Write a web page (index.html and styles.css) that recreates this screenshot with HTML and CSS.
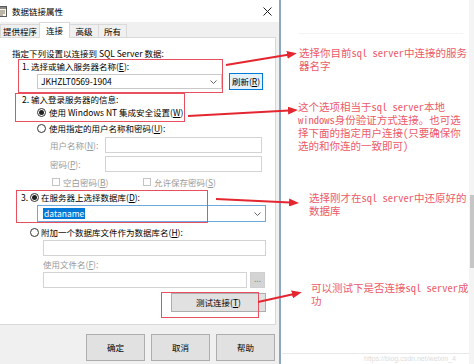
FILE: index.html
```html
<!DOCTYPE html>
<html lang="zh-CN">
<head>
<meta charset="utf-8">
<title>数据链接属性</title>
<link rel="stylesheet" href="styles.css">
</head>
<body>
<div class="page">
  <div class="dialog">
    <div class="titlebar">
      <svg class="app-icon" width="11" height="11" viewBox="0 0 11 11"><rect x="0.5" y="0.5" width="10" height="10" fill="#fdf6dc" stroke="#5a5a5a"/><rect x="1" y="1" width="9" height="2" fill="#8a8a8a"/><path d="M2 5h7M2 7h7M2 9h5" stroke="#777" stroke-width="1"/></svg>
      <span class="title">数据链接属性</span>
      <svg class="close" width="9" height="9" viewBox="0 0 9 9"><path d="M0.5 0.5L8.5 8.5M8.5 0.5L0.5 8.5" stroke="#222" stroke-width="1"/></svg>
    </div>
    <div class="tabs">
      <div class="tab t1">提供程序</div>
      <div class="tab t2 active">连接</div>
      <div class="tab t3">高级</div>
      <div class="tab t4">所有</div>
    </div>
    <div class="panel">
      <div class="row intro">指定下列设置以连接到 SQL Server 数据:</div>
      <div class="row lbl1">1. 选择或输入服务器名称(<u>E</u>):</div>
      <div class="row combo-row">
        <div class="combo c1"><span class="ctext">JKHZLT0569-1904</span><svg class="chev" width="7" height="4" viewBox="0 0 7 4"><path d="M0.5 0.5L3.5 3.5L6.5 0.5" fill="none" stroke="#666"/></svg></div>
        <div class="btn refresh">刷新(<u>R</u>)</div>
      </div>
      <div class="row lbl2">2. 输入登录服务器的信息:</div>
      <div class="row radio-row r1"><span class="radio on"></span><span class="rtext">使用 Windows NT 集成安全设置(<u>W</u>)</span></div>
      <div class="row radio-row r2"><span class="radio"></span><span class="rtext">使用指定的用户名称和密码(<u>U</u>):</span></div>
      <div class="row field-row f1"><span class="flabel">用户名称(<u>N</u>):</span><span class="input w157"></span></div>
      <div class="row field-row f2"><span class="flabel">密码(<u>P</u>):</span><span class="input w157"></span></div>
      <div class="row check-row">
        <span class="chk-group g1"><span class="chk"></span><span class="ctext2">空白密码(<u>B</u>)</span></span>
        <span class="chk-group"><span class="chk"></span><span class="ctext2">允许保存密码(<u>S</u>)</span></span>
      </div>
      <div class="row lbl3"><span class="num">3.</span><span class="radio on"></span><span class="rtext2">在服务器上选择数据库(<u>D</u>):</span></div>
      <div class="row combo-row2">
        <div class="combo c2"><span class="sel">dataname</span><svg class="chev" width="7" height="4" viewBox="0 0 7 4"><path d="M0.5 0.5L3.5 3.5L6.5 0.5" fill="none" stroke="#666"/></svg></div>
      </div>
      <div class="row attach"><span class="radio"></span><span class="rtext2">附加一个数据库文件作为数据库名(<u>H</u>):</span></div>
      <div class="row in-row"><span class="input w223"></span></div>
      <div class="row fname">使用文件名(<u>F</u>):</div>
      <div class="row file-row"><span class="input w204"></span><span class="dots">...</span></div>
      <div class="row test-row"><div class="btn test">测试连接(<u>T</u>)</div></div>
    </div>
    <div class="footer">
      <div class="btn fbtn">确定</div>
      <div class="btn fbtn">取消</div>
      <div class="btn fbtn">帮助</div>
    </div>
  </div>
  <div class="notes">
    <div class="topline"></div>
    <div class="note n1">选择你目前sql server中连接的服务<br>器名字</div>
    <div class="note n2">这个选项相当于sql server本地<br>windows身份验证方式连接。也可选<br>择下面的指定用户连接(只要确保你<br>选的和你连的一致即可)</div>
    <div class="note n3">选择刚才在sql server中还原好的<br>数据库</div>
    <div class="note n4">可以测试下是否连接sql server成<br>功</div>
    <div class="watermark">https://blog.csdn.net/weixin_4</div>
  </div>
  <div class="scrollbar"><div class="thumb"></div></div>
  <svg class="overlay" width="474" height="364" viewBox="0 0 474 364">
    <defs>
      <marker id="ah" viewBox="0 0 10 8" refX="1" refY="4" markerWidth="5" markerHeight="4" orient="auto" markerUnits="strokeWidth">
        <path d="M0,0 L10,4 L0,8 z" fill="#e3262f"/>
      </marker>
    </defs>
    <g fill="none" stroke="#e8505f" stroke-width="1">
      <rect x="18.5" y="59.5" width="204" height="33"/>
      <rect x="15.5" y="93.5" width="169" height="28"/>
      <rect x="16.5" y="190.5" width="191" height="32"/>
      <rect x="161.5" y="292.5" width="97" height="25"/>
    </g>
    <g stroke="#e3262f" stroke-width="2" marker-end="url(#ah)">
      <line x1="226" y1="65" x2="288" y2="54.7"/>
      <line x1="188" y1="116" x2="289" y2="110.5"/>
      <line x1="216" y1="199" x2="290" y2="202.5"/>
      <line x1="258" y1="302" x2="293" y2="294.2"/>
    </g>
  </svg>
</div>
</body>
</html>
```

FILE: styles.css
```css
* { box-sizing: border-box; margin: 0; padding: 0; }
html, body { width: 474px; height: 364px; overflow: hidden; background: #fff; }
body {
  font-family: "Noto Sans CJK SC", "Noto Sans", sans-serif;
  font-size: 8.5px;
  color: #000;
  line-height: 1;
}
u { text-decoration: underline; text-underline-offset: 1px; }

.page { position: relative; display: flex; width: 474px; height: 364px; overflow: hidden; }

.dialog {
  flex: none;
  width: 281px;
  height: 364px;
  background: #f0f0f0;
  border-right: 2px solid #8ba7c6;
  display: flex;
  flex-direction: column;
}
.titlebar { flex: none; height: 22px; background: #fff; display: flex; align-items: center; }
.app-icon { flex: none; margin-left: -4px; }
.title { margin-left: 5px; }
.close { margin-left: auto; margin-right: 7px; }

.tabs { flex: none; height: 15px; display: flex; align-items: flex-end; position: relative; z-index: 1; }
.tab {
  height: 13px;
  border: 1px solid #d9d9d9;
  border-bottom: none;
  background: #f0f0f0;
  display: flex;
  align-items: center;
  justify-content: center;
  margin-left: -1px;
}
.tab.t1 { margin-left: 0; width: 40px; }
.tab.t2 { width: 31px; }
.tab.t3 { width: 30px; }
.tab.t4 { width: 29px; }
.tab.active { height: 16px; background: #fff; margin-bottom: -1px; }

.panel {
  flex: none;
  width: 276px;
  height: 288px;
  background: #fff;
  border: 1px solid #d9d9d9;
  border-left: none;
  display: flex;
  flex-direction: column;
}
.row { flex: none; display: flex; align-items: center; white-space: nowrap; }
.intro { height: 12px; margin-top: 9px; padding-left: 12px; }
.lbl1 { height: 12px; margin-top: 1px; padding-left: 22px; }
.combo-row { height: 17px; margin-top: 1px; padding-left: 37px; }
.combo {
  display: flex;
  align-items: center;
  background: #fff;
  border: 1px solid #c9c9c9;
}
.combo.c1 { width: 185px; height: 15px; padding-left: 3px; }
.combo.c2 { width: 229px; height: 17px; padding-left: 5px; border-color: #6fa8dc; }
.chev { margin-left: auto; margin-right: 4px; }
.btn {
  display: flex;
  align-items: center;
  justify-content: center;
  background: #e1e1e1;
  border: 1px solid #adadad;
}
.refresh { margin-left: 7px; width: 34px; height: 17px; background: #e5f1fb; border-color: #0078d7; }

.lbl2 { height: 12px; margin-top: 3px; padding-left: 22px; }
.radio-row { height: 12px; padding-left: 37px; }
.r1 { margin-top: 1px; }
.r2 { margin-top: 4px; }
.radio {
  flex: none;
  width: 9px;
  height: 9px;
  border: 1px solid #333;
  border-radius: 50%;
  display: flex;
  align-items: center;
  justify-content: center;
  background: #fff;
}
.radio.on::after { content: ""; width: 5px; height: 5px; border-radius: 50%; background: #222; }
.rtext { margin-left: 3px; }
.rtext2 { margin-left: 2px; }

.field-row { height: 16px; padding-left: 50px; margin-top: 3px; }
.flabel { width: 55px; color: #9a9a9a; }
.input { display: block; height: 16px; background: #fff; border: 1px solid #d3d3d3; }
.w157 { width: 157px; }
.w223 { width: 223px; }
.w204 { width: 204px; }

.check-row { height: 12px; margin-top: 4px; padding-left: 52px; color: #9a9a9a; }
.chk-group { display: flex; align-items: center; }
.chk-group.g1 { width: 91px; }
.chk { width: 8px; height: 8px; border: 1px solid #c4c4c4; background: #fff; }
.ctext2 { margin-left: 3px; }

.lbl3 { height: 12px; margin-top: 3px; padding-left: 21px; }
.num { width: 9px; }
.combo-row2 { height: 17px; margin-top: 2px; padding-left: 37px; }
.sel { background: #0078d7; color: #fff; padding: 1px 1px 2px; }

.attach { height: 12px; margin-top: 4px; padding-left: 30px; }
.in-row { height: 16px; margin-top: 2px; padding-left: 43px; }
.fname { height: 12px; margin-top: 2px; padding-left: 43px; color: #9a9a9a; }
.file-row { height: 16px; margin-top: 2px; padding-left: 43px; }
.dots {
  margin-left: 3px;
  width: 15px;
  height: 16px;
  background: #d4d4d4;
  border: 1px solid #cfcfcf;
  color: #8a8a8a;
  display: flex;
  align-items: center;
  justify-content: center;
  padding-bottom: 3px;
}
.test-row { height: 19px; margin-top: 5px; justify-content: flex-end; padding-right: 9px; }
.test { width: 95px; height: 19px; }

.footer {
  flex: none;
  width: 279px;
  display: flex;
  justify-content: flex-end;
  gap: 6px;
  padding-top: 9px;
  padding-right: 4px;
}
.fbtn { width: 59px; height: 27px; }

.notes {
  flex: 1;
  height: 364px;
  display: flex;
  flex-direction: column;
  font-family: "Noto Sans Mono CJK SC", "Noto Sans CJK SC", monospace;
  font-size: 10.5px;
  line-height: 13px;
  color: #ec5a68;
}
.topline { flex: none; height: 34px; margin: 0 6px 0 18px; border-bottom: 1px solid #f3f3f3; }
.note { flex: none; white-space: nowrap; }
.n1 { margin-top: 12px; padding-left: 18px; }
.n2 { margin-top: 28px; padding-left: 17px; }
.n3 { margin-top: 39px; padding-left: 28px; }
.n4 { margin-top: 64px; padding-left: 30px; }
.watermark {
  flex: none;
  margin-top: auto;
  height: 11px;
  border-top: 1px solid #e8e8e8;
  margin-left: 1px;
  padding-left: 82px;
  font-family: "Liberation Sans", sans-serif;
  font-size: 7px;
  line-height: 10px;
  color: #dcdcdc;
  white-space: nowrap;
}

.scrollbar { flex: none; width: 5px; height: 364px; background: #f4f4f4; padding-top: 195px; }
.thumb { width: 4px; margin-left: 1px; height: 73px; background: #c6c6c6; }

.overlay { position: absolute; left: 0; top: 0; pointer-events: none; }
```
